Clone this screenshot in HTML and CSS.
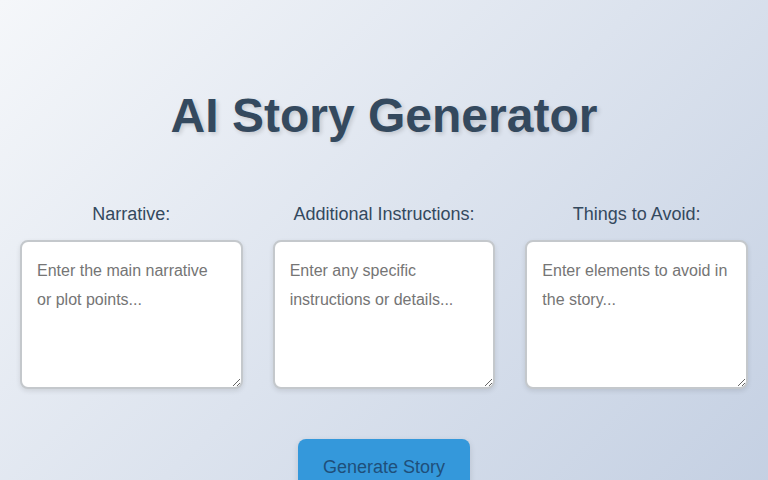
FILE: index.html
```html
<!DOCTYPE html>
<html lang="en">
<head>
<meta charset="utf-8">
<title>AI Story Generator</title>
<link rel="stylesheet" href="styles.css">
</head>
<body>
<div class="container">
  <h1 class="title">AI Story Generator</h1>
  <div class="fields">
    <div class="field">
      <label class="label" for="narrative">Narrative:</label>
      <textarea class="input" id="narrative" placeholder="Enter the main narrative or plot points..."></textarea>
    </div>
    <div class="field">
      <label class="label" for="instructions">Additional Instructions:</label>
      <textarea class="input" id="instructions" placeholder="Enter any specific instructions or details..."></textarea>
    </div>
    <div class="field">
      <label class="label" for="avoid">Things to Avoid:</label>
      <textarea class="input" id="avoid" placeholder="Enter elements to avoid in the story..."></textarea>
    </div>
  </div>
  <div class="actions">
    <button class="button" type="button">Generate Story</button>
  </div>
</div>
</body>
</html>
```
FILE: styles.css
```css
html, body {
  margin: 0;
  padding: 0;
}
body {
  min-height: 100vh;
  box-sizing: border-box;
  background: linear-gradient(135deg, #f5f7fa 0%, #c3cfe2 100%);
  font-family: "Liberation Sans", Arial, sans-serif;
  color: #2c3e50;
  padding: 20px;
  overflow: hidden;
}
.container {
  display: flex;
  flex-direction: column;
}
.title {
  margin: 68px 0 0;
  font-size: 48px;
  line-height: 55px;
  font-weight: bold;
  text-align: center;
  color: #34495e;
  text-shadow: 2px 2px 4px rgba(0, 0, 0, 0.15);
}
.fields {
  margin-top: 61px;
  display: grid;
  grid-template-columns: repeat(3, minmax(0, 1fr));
  gap: 30px;
}
.field {
  display: flex;
  flex-direction: column;
  align-items: stretch;
  min-width: 0;
}
.label {
  font-size: 18px;
  line-height: 21px;
  text-align: center;
  color: #34495e;
  margin-bottom: 15px;
}
.input {
  display: block;
  box-sizing: border-box;
  height: 149px;
  width: 100%;
  min-width: 0;
  padding: 14px 15px;
  border: 2px solid #c4c8cc;
  border-radius: 8px;
  background: #fff;
  font-family: "Liberation Sans", Arial, sans-serif;
  font-size: 16px;
  line-height: 29px;
  color: #333;
  box-shadow: 0 2px 5px rgba(0, 0, 0, 0.1);
  resize: vertical;
  margin: 0;
}
.input::placeholder {
  color: #757575;
}
.actions {
  margin-top: 50px;
  display: flex;
  justify-content: center;
}
.button {
  background: #3498db;
  color: #1f4f7a;
  border: none;
  border-radius: 8px;
  padding: 18px 25px;
  font-family: "Liberation Sans", Arial, sans-serif;
  font-size: 18px;
  line-height: 21px;
  box-shadow: 0 2px 6px rgba(0, 0, 0, 0.12);
  cursor: pointer;
}
```
